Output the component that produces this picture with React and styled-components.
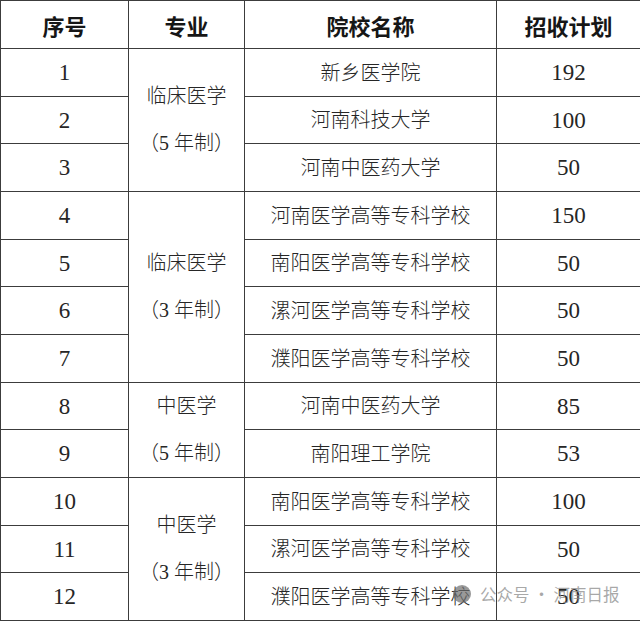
import React from "react";
import styled, { createGlobalStyle } from "styled-components";

const Global = createGlobalStyle`
  html, body { margin: 0; padding: 0; background: #fff; }
  body { width: 640px; height: 621px; overflow: hidden; }
`;

const Wrap = styled.div`
  position: relative;
  width: 640px;
  height: 621px;
  background: #fff;
`;

const Table = styled.table`
  width: 640px;
  border-collapse: collapse;
  table-layout: fixed;
  font-family: "Liberation Serif", "Noto Sans CJK SC", serif;
  color: #262626;
`;

const Th = styled.th`
  height: ${(p) => p.$h}px;
  border: 1px solid #3c3c3c;
  padding: 0;
  font-family: "Noto Sans CJK SC", sans-serif;
  font-weight: 700;
  font-size: 22px;
  line-height: 1;
  color: #161616;
  text-align: center;
  vertical-align: middle;
`;

const Td = styled.td`
  height: ${(p) => p.$h}px;
  border: 1px solid #3c3c3c;
  padding: 0;
  text-align: center;
  vertical-align: middle;
  font-size: ${(p) => (p.$num ? 23 : 20)}px;
  font-weight: 300;
  line-height: 1;
`;

const MajorCell = styled(Td)`
  line-height: 47px;
`;

const MajorLine = styled.div`
  white-space: nowrap;
`;

const Watermark = styled.div`
  position: absolute;
  left: 453px;
  top: 582px;
  display: flex;
  align-items: center;
  gap: 9px;
  font-family: "Noto Sans CJK SC", sans-serif;
  font-size: 16.5px;
  color: rgba(140, 140, 140, 0.75);
  pointer-events: none;
`;

const WmIcon = styled.div`
  width: 18px;
  height: 18px;
  border-radius: 50%;
  background: rgba(110, 110, 110, 0.7);
`;

const rows = [
  { n: 1, school: "新乡医学院", plan: 192, major: ["临床医学", "（5 年制）"], span: 3 },
  { n: 2, school: "河南科技大学", plan: 100 },
  { n: 3, school: "河南中医药大学", plan: 50 },
  { n: 4, school: "河南医学高等专科学校", plan: 150, major: ["临床医学", "（3 年制）"], span: 4 },
  { n: 5, school: "南阳医学高等专科学校", plan: 50 },
  { n: 6, school: "漯河医学高等专科学校", plan: 50 },
  { n: 7, school: "濮阳医学高等专科学校", plan: 50 },
  { n: 8, school: "河南中医药大学", plan: 85, major: ["中医学", "（5 年制）"], span: 2 },
  { n: 9, school: "南阳理工学院", plan: 53 },
  { n: 10, school: "南阳医学高等专科学校", plan: 100, major: ["中医学", "（3 年制）"], span: 3 },
  { n: 11, school: "漯河医学高等专科学校", plan: 50 },
  { n: 12, school: "濮阳医学高等专科学校", plan: 50 },
];

const heights = [47, 46, 47, 47, 46, 47, 47, 46, 47, 47, 46, 47];

export default function App() {
  return (
    <Wrap>
      <Global />
      <Table>
        <colgroup>
          <col style={{ width: 128 }} />
          <col style={{ width: 116 }} />
          <col style={{ width: 252 }} />
          <col style={{ width: 144 }} />
        </colgroup>
        <thead>
          <tr>
            <Th $h={47}>序号</Th>
            <Th $h={47}>专业</Th>
            <Th $h={47}>院校名称</Th>
            <Th $h={47}>招收计划</Th>
          </tr>
        </thead>
        <tbody>
          {rows.map((r, i) => (
            <tr key={r.n}>
              <Td $h={heights[i]} $num>{r.n}</Td>
              {r.major && (
                <MajorCell rowSpan={r.span}>
                  {r.major.map((m) => (
                    <MajorLine key={m}>{m}</MajorLine>
                  ))}
                </MajorCell>
              )}
              <Td $h={heights[i]}>{r.school}</Td>
              <Td $h={heights[i]} $num>{r.plan}</Td>
            </tr>
          ))}
        </tbody>
      </Table>
      <Watermark>
        <WmIcon />
        <span>公众号 · 河南日报</span>
      </Watermark>
    </Wrap>
  );
}
